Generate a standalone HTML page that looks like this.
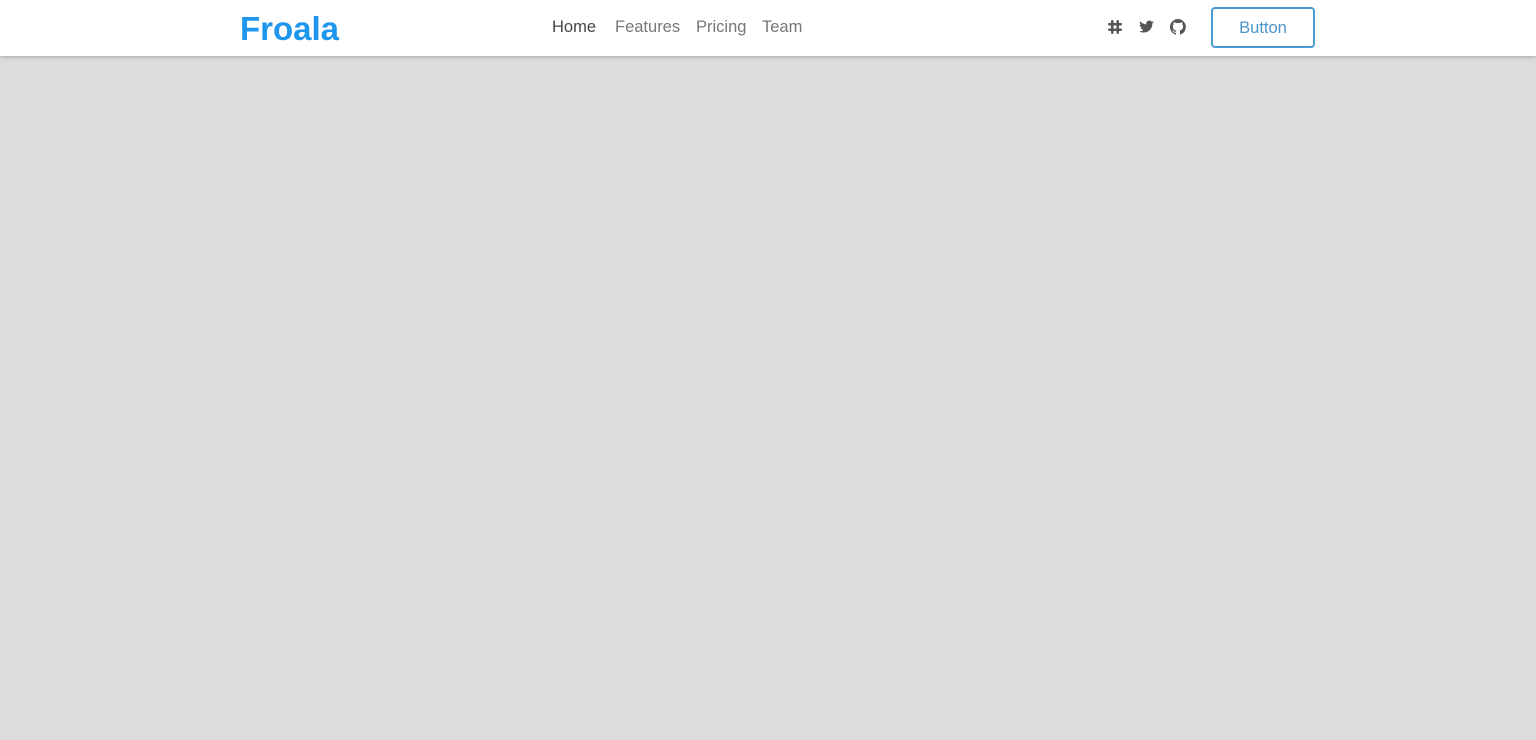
<!DOCTYPE html>
<html><head><meta charset="utf-8"><style>
html,body{margin:0;padding:0;width:1536px;height:740px;overflow:hidden;background:#dddddd;font-family:"Liberation Sans",sans-serif}
.nav{position:absolute;left:0;top:0;width:1536px;height:56px;background:#fff;box-shadow:0 1px 4px rgba(0,0,0,.25)}
.logo{position:absolute;left:240px;top:10px;font-size:33px;font-weight:bold;color:#1e96ed;letter-spacing:0;font-family:"Liberation Sans",sans-serif}
.links{position:absolute;top:18px;font-size:16.5px;color:#777}
.links span{position:absolute;white-space:nowrap}
.btn{position:absolute;left:1211px;top:7px;width:100px;height:37px;border:2px solid #4a9ccf;border-radius:4px;color:#4a94c8;font-size:16.5px;text-align:center;line-height:38px}
.ic{position:absolute;top:19px}
</style></head><body>
<div class="nav">
<div class="logo">Froala</div>
<div class="links">
<span style="left:552px;color:#444">Home</span>
<span style="left:615px">Features</span>
<span style="left:696px">Pricing</span>
<span style="left:762px">Team</span>
</div>
<svg class="ic" style="left:1107px" width="16" height="16" viewBox="0 0 16 16" fill="#555"><rect x="4" y="1" width="2.5" height="14" rx="1.2"/><rect x="9.5" y="1" width="2.5" height="14" rx="1.2"/><rect x="1" y="4" width="14" height="2.5" rx="1.2"/><rect x="1" y="9.5" width="14" height="2.5" rx="1.2"/></svg>
<svg class="ic" style="left:1138px" width="17" height="16" viewBox="0 0 24 24" fill="#555"><path d="M23 4.6a9 9 0 0 1-2.6.7 4.5 4.5 0 0 0 2-2.5 9 9 0 0 1-2.9 1.1A4.5 4.5 0 0 0 11.8 8 12.8 12.8 0 0 1 2.5 3.3a4.5 4.5 0 0 0 1.4 6 4.5 4.5 0 0 1-2-.6 4.5 4.5 0 0 0 3.6 4.5 4.5 4.5 0 0 1-2 .1 4.5 4.5 0 0 0 4.2 3.1A9 9 0 0 1 1 18.3 12.8 12.8 0 0 0 7.9 20.3c8.3 0 12.8-6.9 12.8-12.8v-.6A9 9 0 0 0 23 4.6z"/></svg>
<svg class="ic" style="left:1170px" width="16" height="16" viewBox="0 0 16 16" fill="#555"><path d="M8 0a8 8 0 0 0-2.5 15.6c.4.1.5-.2.5-.4v-1.4c-2.2.5-2.7-1-2.7-1-.4-.9-.9-1.2-.9-1.2-.7-.5.1-.5.1-.5.8.1 1.2.8 1.2.8.7 1.2 1.900.9 2.3.7.1-.5.3-.9.5-1.1-1.8-.2-3.6-.9-3.6-4 0-.9.3-1.6.8-2.1-.1-.2-.4-1 .1-2.1 0 0 .7-.2 2.2.8a7.5 7.5 0 0 1 4 0c1.5-1 2.2-.8 2.2-.8.4 1.1.2 1.9.1 2.1.5.6.8 1.3.8 2.1 0 3.1-1.9 3.7-3.6 3.9.3.3.5.8.5 1.5v2.2c0 .2.1.5.6.4A8 8 0 0 0 8 0z"/></svg>
<div class="btn">Button</div>
</div>
</body></html>
